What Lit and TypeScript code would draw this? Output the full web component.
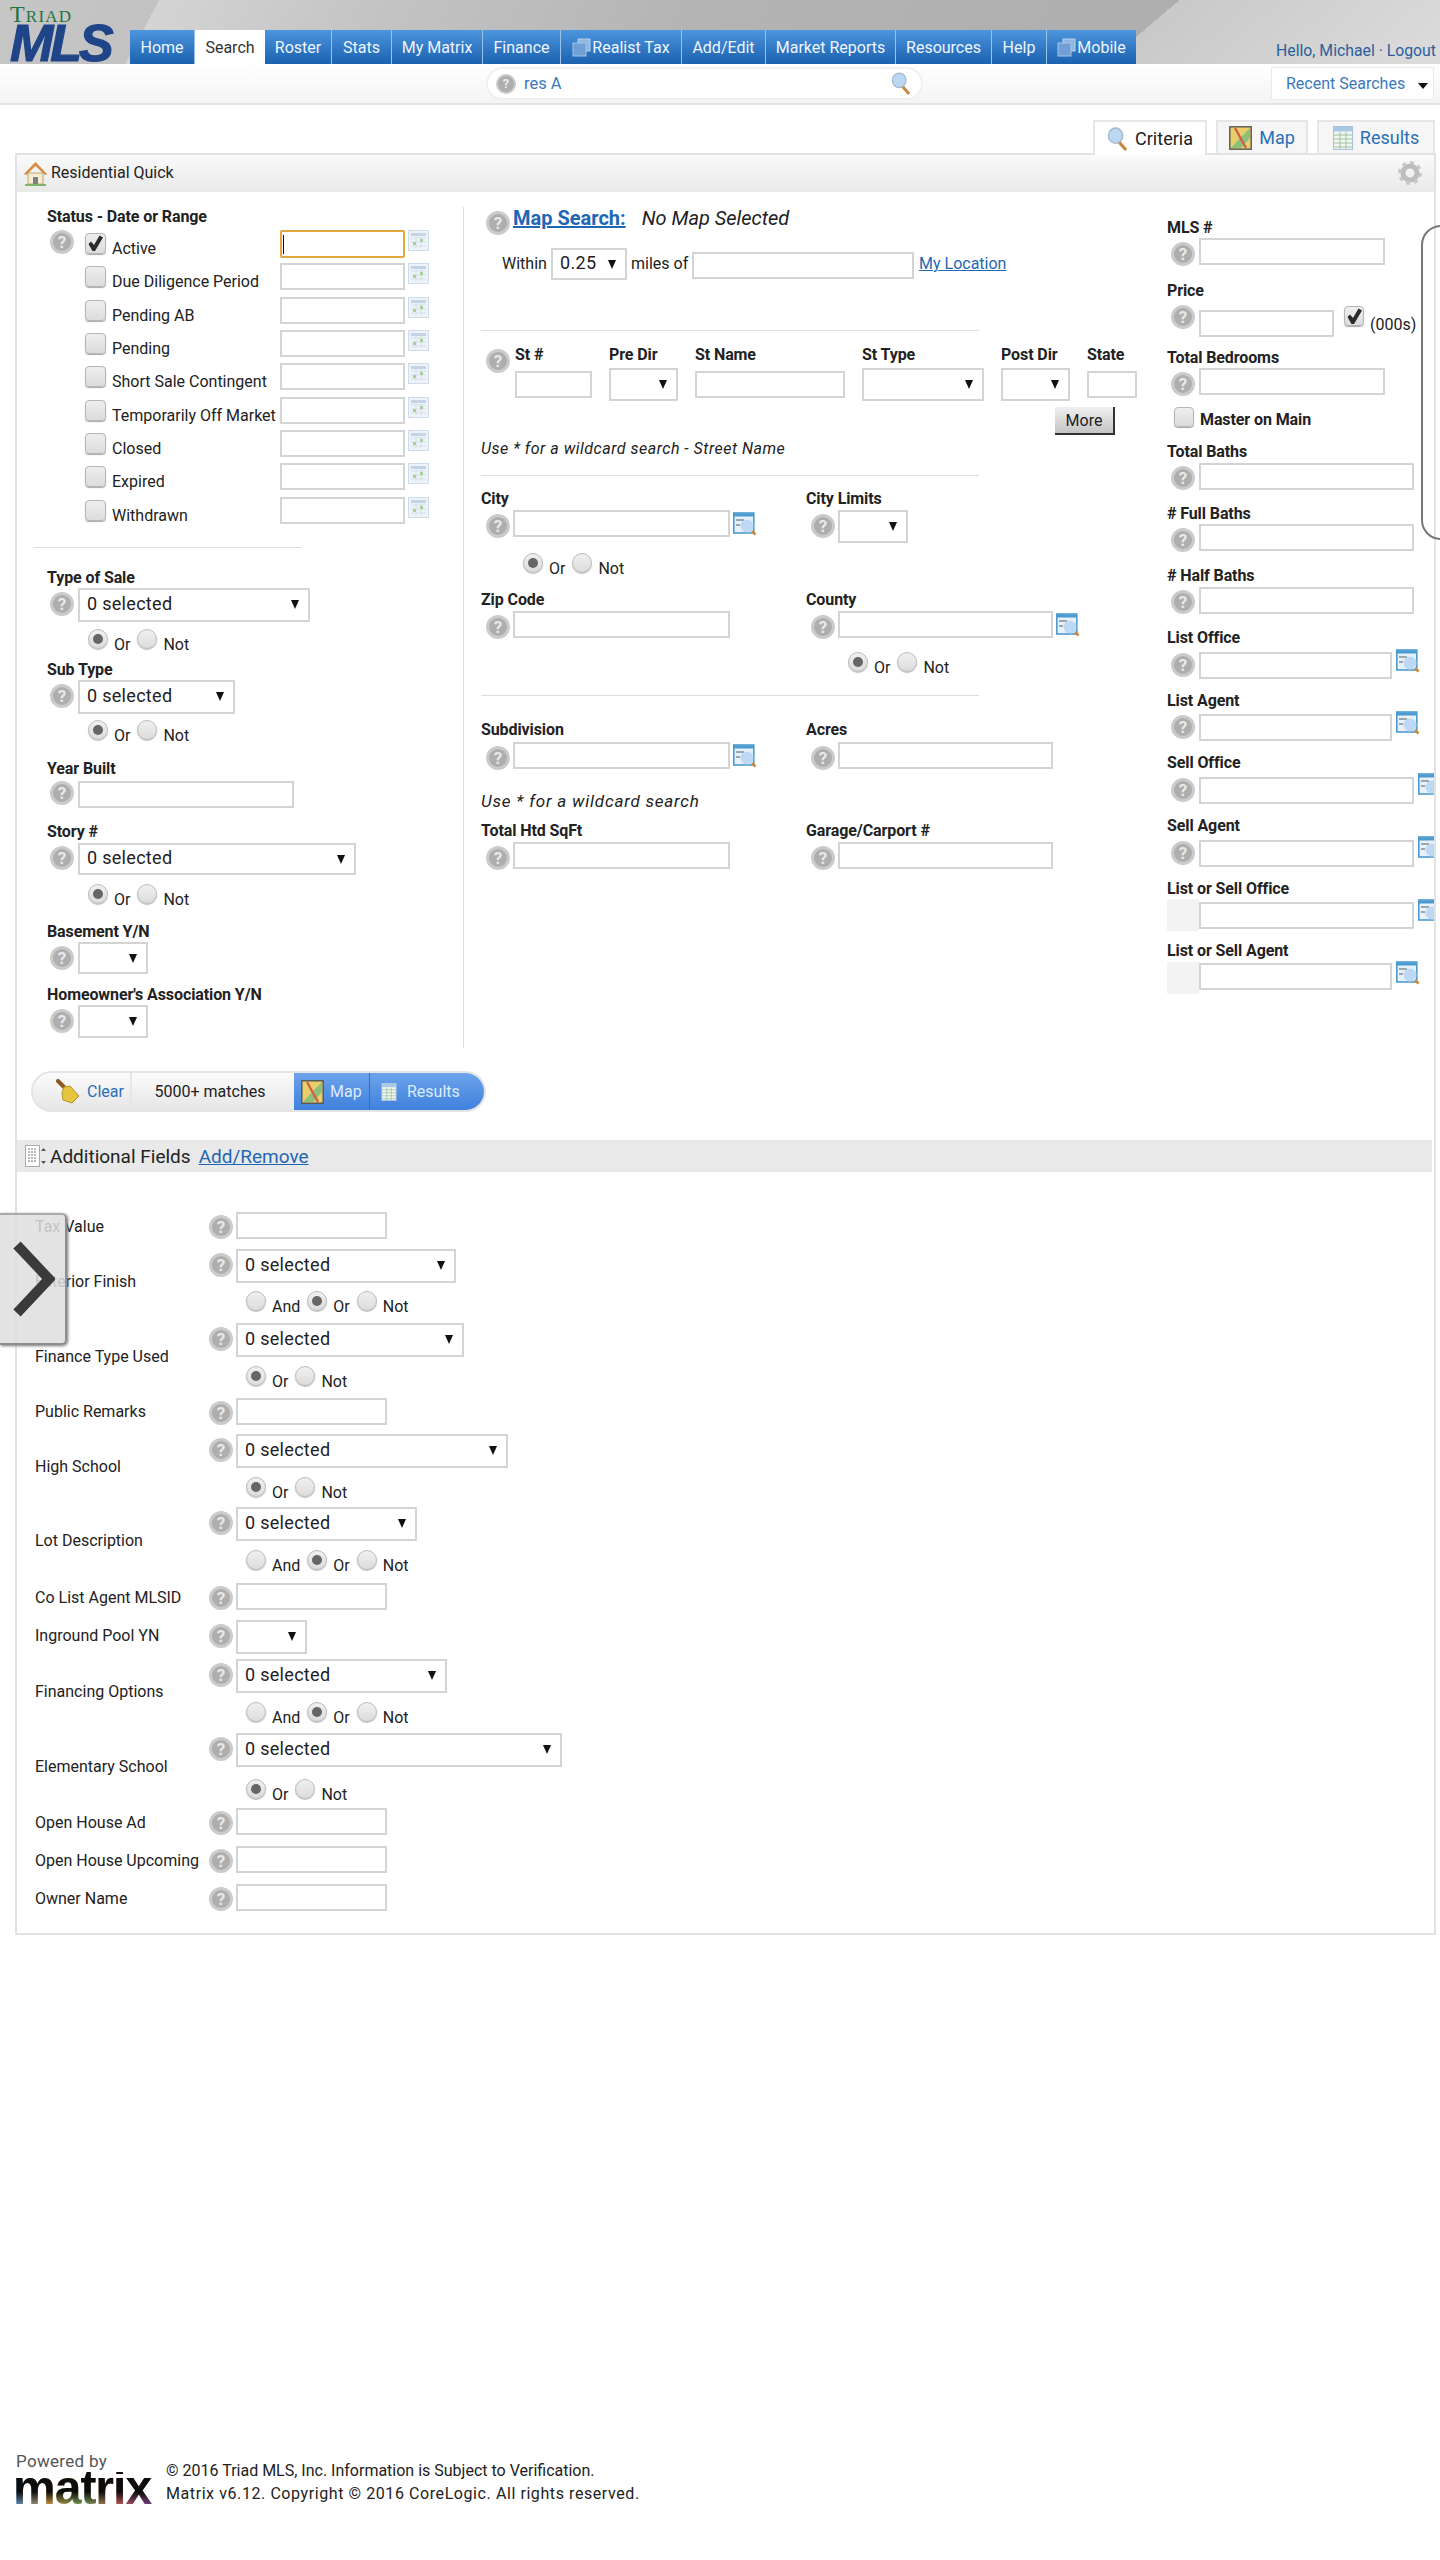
import { LitElement, html, css, svg } from "lit";
import { customElement } from "lit/decorators.js";

const help = (mt = 3) => html`<span class="help" style="margin-top:${mt}px">?</span>`;
const inp = (w: number, mt = 0) => html`<input class="in" style="width:${w}px;margin-top:${mt}px" />`;
const sel = (w: number, text = "", mt = 0, h = 33) =>
  html`<div class="sel" style="width:${w}px;height:${h}px;margin-top:${mt}px"><span>${text}</span></div>`;
const check = (on = false) =>
  html`<span class="cb">${on ? svg`<svg width="19" height="19" viewBox="0 0 19 19"><path d="M2.5 10 L5 7.5 L8 11 L13.5 1.5 L17 3.5 L9 17 L6.5 17 Z" fill="#2b2b2b"/></svg>` : ""}</span>`;
const radios = (opts: [string, boolean][], ml: number, mt: number) => html`<div class="radios" style="margin-left:${ml}px;margin-top:${mt}px">
  ${opts.map(([t, on]) => html`<span class="ropt"><span class="rd ${on ? "on" : ""}"></span><span class="rl">${t}</span></span>`)}
</div>`;
const ON: [string, boolean][] = [["Or", true], ["Not", false]];
const AON: [string, boolean][] = [["And", false], ["Or", true], ["Not", false]];

const lookup = (mt = 0) => html`<svg class="icon" style="margin-top:${mt}px" width="24" height="27" viewBox="0 0 24 27">
  <rect x="0.8" y="1" width="20" height="20" fill="#e8f1fa" stroke="#4c9bd0" stroke-width="1.6"/>
  <rect x="1" y="1.5" width="19.5" height="3" fill="#4c9bd0"/>
  <rect x="3" y="7" width="8" height="2" fill="#9aa7b0"/><rect x="3" y="12" width="4" height="2" fill="#9aa7b0"/>
  <circle cx="14" cy="14" r="6.5" fill="#bcd8f3"/><path d="M19 19l3.5 3.5" stroke="#c98a3d" stroke-width="2.6"/>
</svg>`;
const cal = () => html`<svg class="icon cal" width="21" height="21" viewBox="0 0 21 21">
  <rect x="0.5" y="0.5" width="20" height="20" fill="#eef3fa" stroke="#cfdcec"/>
  <rect x="3" y="3" width="15" height="3" fill="#c4d4e4"/>
  <path d="M3 8h15M3 12h15M3 16h15M8 6v12M13 6v12" stroke="#d5dfe8"/>
  <rect x="5" y="12" width="3" height="3" fill="#a6cf9c"/><rect x="12" y="9" width="3" height="3" fill="#a6cf9c"/>
</svg>`;
const mag = (s = 22) => html`<svg class="icon" width="${s}" height="${s + 3}" viewBox="0 0 22 25">
  <path d="M12 15l7 8" stroke="#c68a45" stroke-width="3.4" stroke-linecap="round"/>
  <ellipse cx="9" cy="9" rx="7.5" ry="8" fill="#bcd7f2" stroke="#a5b8cc" stroke-width="1.4"/>
</svg>`;
const mapIc = (w = 23, h = 24) => html`<svg class="icon" width="${w}" height="${h}" viewBox="0 0 23 24">
  <rect x="0.8" y="0.8" width="21.4" height="22.4" fill="#e8cf6a" stroke="#555" stroke-width="1.4"/>
  <path d="M2 22L10 13 L21 2V12L12 22Z" fill="#8fc07a"/>
  <path d="M6 2 L17 22" stroke="#d0604c" stroke-width="2.4"/>
</svg>`;
const tableIc = (w = 20, h = 24) => html`<svg class="icon" width="${w}" height="${h}" viewBox="0 0 20 24">
  <rect x="0.5" y="0.5" width="19" height="23" fill="#f0f6ee" stroke="#a9c1dc"/>
  <rect x="1" y="1" width="18" height="4.5" fill="#a9c8e8"/>
  <path d="M1 9h18M1 13h18M1 17h18M1 21h18M7 6v17M13 6v17" stroke="#9ec2a8"/>
</svg>`;
const winIc = () => html`<svg class="icon win" width="19" height="19" viewBox="0 0 19 19">
  <rect x="6" y="1" width="12" height="12" fill="#8fb7e0" stroke="#b9d2ec"/>
  <rect x="1" y="5" width="13" height="13" fill="#6f9fd4" stroke="#a6c4e6"/>
</svg>`;

const NAV: [string, boolean?][] = [
  ["Home"], ["Search"], ["Roster"], ["Stats"], ["My Matrix"], ["Finance"], ["Realist Tax", true],
  ["Add/Edit"], ["Market Reports"], ["Resources"], ["Help"], ["Mobile", true],
];
const NAVW = [65, 70, 67, 60, 91, 78, 121, 84, 130, 96, 55, 89];
const STATUS = ["Active", "Due Diligence Period", "Pending AB", "Pending", "Short Sale Contingent", "Temporarily Off Market", "Closed", "Expired", "Withdrawn"];

type R = { l: string; lm: number; hm: number; im: number; w: number; gray?: boolean; look?: number };
const RIGHT: R[] = [
  { l: "MLS #", lm: 11, hm: 4, im: 0, w: 186 },
  { l: "Price", lm: 15, hm: 4, im: 9, w: 135 },
  { l: "Total Bedrooms", lm: 11, hm: 4, im: 0, w: 186 },
  { l: "Total Baths", lm: 11, hm: 4, im: 1, w: 215 },
  { l: "# Full Baths", lm: 14, hm: 4, im: 0, w: 215 },
  { l: "# Half Baths", lm: 14, hm: 4, im: 1, w: 215 },
  { l: "List Office", lm: 14, hm: 5, im: 4, w: 193, look: 1 },
  { l: "List Agent", lm: 12, hm: 4, im: 3, w: 193, look: 0 },
  { l: "Sell Office", lm: 12, hm: 5, im: 4, w: 215, look: 0 },
  { l: "Sell Agent", lm: 12, hm: 5, im: 4, w: 215, look: 0 },
  { l: "List or Sell Office", lm: 12, hm: 0, im: 3, w: 215, gray: true, look: 0 },
  { l: "List or Sell Agent", lm: 10, hm: 1, im: 2, w: 193, gray: true, look: 0 },
];

type A = { l: string; h: number; kind: "in" | "sel"; w?: number; text?: string; r?: [string, boolean][]; rm?: number };
const ADD: A[] = [
  { l: "Tax Value", h: 37, kind: "in" },
  { l: "Exterior Finish", h: 74, kind: "sel", w: 220, text: "0 selected", r: AON, rm: 8 },
  { l: "Finance Type Used", h: 75, kind: "sel", w: 228, text: "0 selected", r: ON, rm: 9 },
  { l: "Public Remarks", h: 36, kind: "in" },
  { l: "High School", h: 73, kind: "sel", w: 272, text: "0 selected", r: ON, rm: 9 },
  { l: "Lot Description", h: 76, kind: "sel", w: 181, text: "0 selected", r: AON, rm: 9 },
  { l: "Co List Agent MLSID", h: 37, kind: "in" },
  { l: "Inground Pool YN", h: 39, kind: "sel", w: 71 },
  { l: "Financing Options", h: 74, kind: "sel", w: 211, text: "0 selected", r: AON, rm: 9 },
  { l: "Elementary School", h: 75, kind: "sel", w: 326, text: "0 selected", r: ON, rm: 12 },
  { l: "Open House Ad", h: 38, kind: "in" },
  { l: "Open House Upcoming", h: 38, kind: "in" },
  { l: "Owner Name", h: 37, kind: "in" },
];

@customElement("app-root")
export class AppRoot extends LitElement {
  static styles = css`
    :host { display: block; position: relative; font-family: Roboto, "Liberation Sans", sans-serif; font-size: 16px; color: #222; }
    * { box-sizing: border-box; }
    .page { display: flex; flex-direction: column; min-height: 2560px; overflow: hidden; }
    .icon { flex: none; display: block; }
    a, .link { color: #1f67b5; text-decoration: underline; }

    .top { height: 64px; display: flex; align-items: flex-end; padding-right: 4px;
      background: linear-gradient(139.5deg, transparent 766px, #c9c9c9 766px, #dcdcdc 100%),
        linear-gradient(118deg, #c6c6c6 0, #c2c2c2 140px, #d4d4d4 141px, #c4c4c4 330px, #b4b4b4 620px, #ababab 100%); }
    .logo { width: 130px; height: 64px; flex: none; padding-left: 10px; }
    .triad { font: 24px/18px "Liberation Serif", serif; font-variant: small-caps; color: #24743f; height: 18px; margin-top: 5px; letter-spacing: 1.2px; }
    .mls { font: italic 700 52px/41px "Liberation Sans", sans-serif; color: #1f4488; letter-spacing: -3px; -webkit-text-stroke: 1.2px #1f4488; }
    .nav { display: flex; height: 34px; }
    .nav div { display: flex; align-items: center; justify-content: center; gap: 1px; color: #eef5ff; border-right: 1px solid #9dc0e6;
      background: linear-gradient(#4e95e0, #1a61ae); font-size: 16px; white-space: nowrap; }
    .nav div.act { background: #fff; color: #333; border-right: 0; }
    .nav div:last-child { border-right: 0; }
    .hello { margin-left: auto; color: #2b5f9c; align-self: flex-end; padding-bottom: 4px; font-size: 15.8px; white-space: nowrap; }

    .sub { height: 41px; display: flex; padding: 3px 6px 0 486px; gap: 348px; border-bottom: 2px solid #e3e3e3;
      background: linear-gradient(#fff, #f4f4f4); }
    .omni { width: 437px; height: 33px; border: 2px solid #f0f0f0; background: #fff; border-radius: 17px; display: flex; align-items: center; padding: 0 10px 0 8px; color: #3a78bd; font-size: 16.5px; }
    .omni .help { width: 20px; height: 20px; font-size: 13px; line-height: 15px; border-width: 2px; margin: 0 8px 0 0; }
    .omni .q { flex: 1; }
    .recent { width: 163px; height: 33px; background: #fff; border: 1px solid #eaeaea; display: flex; align-items: center; color: #3a78bd; padding-left: 14px; position: relative; white-space: nowrap; }
    .recent i { margin-left: 13px; margin-top: 4px; border-top: 6px solid #111; border-left: 5px solid transparent; border-right: 5px solid transparent; }

    .tabs { display: flex; justify-content: flex-end; gap: 9px; padding: 15px 5px 0 0; height: 48px; }
    .tab { height: 33px; display: flex; align-items: center; font-size: 18px; color: #2a6fb8; gap: 7px; background: #f6f6f6;
      border: 2px solid #e6e6e6; border-bottom: 0; justify-content: center; }
    .tab.act { background: #fff; color: #222; height: 35px; margin-bottom: -2px; position: relative; z-index: 1; }

    .panel { margin-left: 15px; width: 1421px; border: 2px solid #e2e2e2; padding-bottom: 12px; position: relative; }
    .ph { height: 37px; display: flex; align-items: center; padding: 0 12px 2px 6px; gap: 3px; background: linear-gradient(#fafafa, #e9e9e9); }
    .ph .sp { flex: 1; }
    .body { display: flex; padding-top: 15px; align-items: stretch; }
    .col1 { width: 447px; flex: none; border-right: 1px solid #ddd; height: 841px; }
    .col2 { width: 703px; flex: none; padding-left: 17px; }
    .col3 { flex: 1; min-width: 0; overflow: hidden; }

    .lbl { font-weight: 700; font-size: 16px; line-height: 20px; height: 20px; white-space: nowrap; letter-spacing: -0.1px; }
    .in { display: block; flex: none; height: 27px; border: 2px solid #d4d4d4; background: #fff; padding: 0; margin: 0; outline: 0; }
    .sel { flex: none; border: 2px solid #d4d4d4; background: #fff; position: relative; padding: 0 0 3px 7px; display: flex; align-items: center; font-size: 18px; color: #222; letter-spacing: .3px; white-space: nowrap; }
    .sel::after { content: ""; position: absolute; right: 9px; top: 10px; border-top: 9px solid #111; border-left: 4px solid transparent; border-right: 4px solid transparent; }
    .help { flex: none; display: block; width: 24px; height: 24px; border-radius: 50%; background: #aeaeae; border: 3px solid #cbcbcb; color: #e9e9e9; font-weight: 700; font-size: 17px; line-height: 18px; text-align: center; }
    .cb { flex: none; display: block; width: 21px; height: 21px; border: 1px solid #b5b5b5; border-radius: 4px; background: linear-gradient(#eee, #dcdcdc); box-shadow: 0 1px 1px #aaa; margin-top: 3px; }
    .cb svg { display: block; }
    .radios { display: flex; gap: 7px; height: 30px; }
    .ropt { display: flex; gap: 6px; }
    .rd { flex: none; width: 20px; height: 20px; border-radius: 50%; border: 1px solid #bbb; background: linear-gradient(#f0f0f0, #dcdcdc); box-shadow: 0 1px 1px #bbb; position: relative; }
    .rd.on::after { content: ""; position: absolute; left: 4px; top: 4px; width: 10px; height: 10px; border-radius: 50%; background: #666; }
    .rl { line-height: 20px; margin-top: 6px; }

    .srow { height: 33.33px; display: flex; align-items: flex-start; padding-left: 33px; }
    .srow .hs { width: 35px; flex: none; }
    .srow .t { width: 174px; padding-left: 6px; padding-top: 9px; line-height: 20px; white-space: nowrap; flex: none; }
    .srow .cal { margin: 0 0 0 3px; }
    .fwrap { position: relative; flex: none; display: block; }
    .fwrap::after { content: ""; position: absolute; left: 3px; top: 5px; width: 1px; height: 19px; background: #111; }
    .in.focus { border-color: #e3a93c; border-radius: 2px; height: 28px; }
    .hr1 { margin: 17px 0 0 17px; width: 267px; height: 1px; background: #ddd; }
    .lf { padding-left: 30px; }
    .ctl { display: flex; align-items: flex-start; gap: 4px; padding-left: 3px; }

    .hr2 { width: 498px; height: 1px; background: #ddd; }
    .h5 { margin-left: 5px; }
    .mapr { display: flex; align-items: flex-start; }
    .mapt { font-size: 20px; line-height: 22px; font-weight: 700; }
    .maps { font-size: 20px; line-height: 22px; font-style: italic; margin-left: 16px; }
    .within { display: flex; align-items: flex-start; margin: 13px 0 0 21px; line-height: 32px; }
    .within .w1 { width: 49px; }
    .within .w2 { width: 65px; padding-left: 4px; white-space: nowrap; }
    .street { display: flex; gap: 17px; margin-top: 14px; margin-left: 5px; }
    .street > .help { margin: 4px -12px 0 0; }
    .scol .lbl { height: 23px; line-height: 20px; }
    .morew { display: flex; padding-left: 574px; margin-top: 6px; }
    .more { width: 60px; height: 28px; display: flex; align-items: center; justify-content: center; background: linear-gradient(#f0f0f0, #c4c4c4); border-right: 2px solid #333; border-bottom: 2px solid #333; }
    .note { font-style: italic; line-height: 20px; height: 20px; font-size: 16px; letter-spacing: .5px; white-space: nowrap; }
    .note.wide { font-size: 17px; letter-spacing: .8px; }
    .two { display: grid; grid-template-columns: 325px 1fr; }
    .cc { display: flex; align-items: flex-start; gap: 3px; margin-top: 1px; padding-left: 5px; }

    .col3 .rf { display: flex; align-items: flex-start; gap: 4px; padding-left: 4px; }
    .col3 .rf.g { padding-left: 0; }
    .gray { width: 32px; height: 32px; background: #f3f3f3; flex: none; margin-right: -4px; }
    .miss { display: flex; gap: 6px; padding-left: 7px; margin-top: 8px; height: 27px; }
    .miss .cb { margin: 3px 0 0; width: 20px; height: 20px; }
    .miss .lbl { margin-top: 6px; }
    .k000 { display: flex; gap: 6px; margin-left: 6px; margin-top: 8px; }
    .k000 .cb { margin-top: -3px; width: 20px; height: 20px; }
    .k000 span.t { margin-top: 6px; line-height: 20px; white-space: nowrap; }

    .bar { margin: 23px 0 0 14px; width: 455px; height: 41px; border: 2px solid #e4e4e4; border-radius: 21px; display: flex; overflow: hidden; background: linear-gradient(#fbfbfb, #e6e6e6); }
    .bar > div { display: flex; align-items: center; height: 100%; }
    .clear { width: 99px; padding-left: 23px; gap: 6px; border-right: 2px solid #e6e6e6; color: #2a6fb8; }
    .cnt { width: 162px; justify-content: center; padding-right: 6px; }
    .bmap { width: 76px; background: linear-gradient(#6da3ea, #3f81dd); color: #dcebff; padding-left: 7px; gap: 6px; border-right: 1px solid #2c6fd0; }
    .bres { flex: 1; background: linear-gradient(#6da3ea, #3f81dd); color: #dcebff; padding-left: 10px; gap: 9px; }

    .addh { margin-top: 28px; height: 32px; background: #e9e9e9; display: flex; align-items: center; padding-left: 8px; font-size: 19px; width: 1415px; }
    .addh .link { margin-left: 8px; }
    .rows { margin-top: 40px; padding-left: 18px; }
    .arow { display: grid; grid-template-columns: 174px 27px 1fr; }
    .arow .al { align-self: center; white-space: nowrap; margin-top: -8px; line-height: 20px; }
    .arow .ah { display: block; }

    .tilt { position: absolute; left: 0; top: 1213px; width: 67px; height: 132px; background: rgba(222, 222, 222, .86); border-right: 2px solid #8e8e8e; border-bottom: 2px solid #8e8e8e; border-top: 2px solid #aaa; border-radius: 0 5px 5px 0; box-shadow: 1px 1px 3px #777; display: flex; align-items: center; justify-content: center; }
    .curve { position: absolute; left: 1421px; top: 225px; width: 40px; height: 315px; border: 2px solid #777; border-radius: 26px; background: transparent; }

    .foot { margin-top: auto; display: flex; padding: 0 0 55px 16px; }
    .flogo { width: 150px; flex: none; margin-top: -3px; }
    .pb { color: #555; font-size: 17px; line-height: 15px; height: 18px; letter-spacing: .3px; white-space: nowrap; }
    .mx { font: 700 48px/32px "Liberation Sans", sans-serif; letter-spacing: -1px; height: 32px; width: 140px; margin-left: -3px;
      background: linear-gradient(to bottom, #0d0d0d 0 62%, rgba(13, 13, 13, .25) 100%), linear-gradient(to right, #58a6f5, #f5b648, #7fc265, #ea6a6a, #7b4aa6); -webkit-background-clip: text; background-clip: text; color: transparent; }
    .ft { line-height: 23px; padding-top: 2px; }
    .ft .l2 { letter-spacing: .58px; white-space: nowrap; }
  `;

  private rightField(r: R) {
    return html`<div class="lbl" style="margin-top:${r.lm}px">${r.l}</div>
      <div class="rf ${r.gray ? "g" : ""}">
        ${r.gray ? html`<span class="gray" style="margin-top:${r.hm}px"></span>` : help(r.hm)}
        ${inp(r.w, r.im)}
        ${r.look !== undefined ? lookup(r.look) : ""}
        ${r.l === "Price" ? html`<span class="k000">${check(true)}<span class="t">(000s)</span></span>` : ""}
      </div>
      ${r.l === "Total Bedrooms" ? html`<div class="miss">${check()}<span class="lbl">Master on Main</span></div>` : ""}`;
  }

  render() {
    return html`<div class="page">
      <div class="top">
        <div class="logo"><div class="triad">Triad</div><div class="mls">MLS</div></div>
        <div class="nav">
          ${NAV.map(([t, ic], i) => html`<div class="${t === "Search" ? "act" : ""}" style="width:${NAVW[i]}px">${ic ? winIc() : ""}${t}</div>`)}
        </div>
        <div class="hello">Hello, Michael · Logout</div>
      </div>
      <div class="sub">
        <div class="omni"><span class="help">?</span><span class="q">res A</span>${mag(20)}</div>
        <div class="recent">Recent Searches<i></i></div>
      </div>
      <div class="tabs">
        <div class="tab act" style="width:114px">${mag(21)}Criteria</div>
        <div class="tab" style="width:92px">${mapIc()}Map</div>
        <div class="tab" style="width:118px">${tableIc()}Results</div>
      </div>
      <div class="panel">
        <div class="ph">
          <svg class="icon" width="25" height="26" viewBox="0 0 25 26"><path d="M5 13h15v11H5z" fill="#f4eccd" stroke="#bba97a"/><path d="M10 17h5v7h-5z" fill="#7a7f88"/><path d="M1 14 12.5 2 24 14l-2 1L12.5 6 3 15z" fill="#d98a3a"/><path d="M2 24h21v2H2z" fill="#7eb56a"/></svg>
          Residential Quick<span class="sp"></span>
          <svg class="icon" width="24" height="24" viewBox="0 0 24 24"><circle cx="12" cy="12" r="7" fill="none" stroke="#bdbdbd" stroke-width="5"/><circle cx="12" cy="12" r="10.5" fill="none" stroke="#c8c8c8" stroke-width="3" stroke-dasharray="4 4.2"/></svg>
        </div>
        <div class="body">
          <div class="col1">
            <div class="lf lbl" style="height:23px">Status - Date or Range</div>
            ${STATUS.map((s, i) => html`<div class="srow">
              <span class="hs">${i === 0 ? help(0) : ""}</span>
              ${check(i === 0)}<span class="t">${s}</span>
              ${i === 0
                ? html`<span class="fwrap"><input class="in focus" style="width:125px" /></span>`
                : html`<input class="in" style="width:125px" />`}${cal()}
            </div>`)}
            <div class="hr1"></div>
            <div class="lf">
              <div class="lbl" style="margin-top:20px">Type of Sale</div>
              <div class="ctl">${help(4)}${sel(232, "0 selected", 0, 34)}</div>
              ${radios(ON, 41, 7)}<div style="height:1px"></div>
              <div class="lbl">Sub Type</div>
              <div class="ctl">${help(4)}${sel(157, "0 selected", 0, 34)}</div>
              ${radios(ON, 41, 6)}<div style="height:9px"></div>
              <div class="lbl">Year Built</div>
              <div class="ctl">${help(2)}${inp(216, 2)}</div>
              <div class="lbl" style="margin-top:14px">Story #</div>
              <div class="ctl">${help(4)}${sel(278, "0 selected", 1, 32)}</div>
              ${radios(ON, 41, 9)}<div style="height:8px"></div>
              <div class="lbl">Basement Y/N</div>
              <div class="ctl">${help(4)}${sel(70, "", 0, 32)}</div>
              <div class="lbl" style="margin-top:11px">Homeowner's Association Y/N</div>
              <div class="ctl">${help(4)}${sel(70, "", 0, 33)}</div>
            </div>
          </div>
          <div class="col2">
            <div class="mapr">
              <span class="h5">${help(4)}</span>
              <span class="mapt link" style="margin-left:3px">Map Search:</span><span class="maps">No Map Selected</span>
            </div>
            <div class="within">
              <span class="w1">Within</span>
              <div class="sel" style="width:76px;height:32px">0.25</div>
              <span class="w2">miles of</span>
              ${inp(222, 4)}
              <span class="link" style="margin-left:5px">My Location</span>
            </div>
            <div class="hr2" style="margin-top:50px"></div>
            <div class="street">
              ${help(4)}
              <div class="scol" style="width:77px"><div class="lbl">St #</div>${inp(77, 3)}</div>
              <div class="scol"><div class="lbl">Pre Dir</div>${sel(69)}</div>
              <div class="scol"><div class="lbl">St Name</div>${inp(150, 3)}</div>
              <div class="scol"><div class="lbl">St Type</div>${sel(122)}</div>
              <div class="scol"><div class="lbl">Post Dir</div>${sel(69)}</div>
              <div class="scol"><div class="lbl">State</div>${inp(50, 3)}</div>
            </div>
            <div class="morew"><div class="more">More</div></div>
            <div class="note" style="margin-top:4px">Use * for a wildcard search - Street Name</div>
            <div class="hr2" style="margin-top:16px"></div>
            <div class="two" style="margin-top:13px">
              <div>
                <div class="lbl">City</div>
                <div class="cc">${help(4)}${inp(217)}${lookup(2)}</div>
                ${radios(ON, 42, 14)}<div style="height:7px"></div>
              </div>
              <div>
                <div class="lbl">City Limits</div>
                <div class="cc">${help(4)}${sel(70)}</div>
              </div>
              <div>
                <div class="lbl">Zip Code</div>
                <div class="cc">${help(4)}${inp(217)}</div>
              </div>
              <div>
                <div class="lbl">County</div>
                <div class="cc">${help(4)}${inp(215)}${lookup(2)}</div>
                ${radios(ON, 42, 12)}
              </div>
            </div>
            <div class="hr2" style="margin-top:13px"></div>
            <div class="two" style="margin-top:24px">
              <div>
                <div class="lbl">Subdivision</div>
                <div class="cc" style="margin-top:2px">${help(4)}${inp(217)}${lookup(2)}</div>
              </div>
              <div>
                <div class="lbl">Acres</div>
                <div class="cc" style="margin-top:2px">${help(4)}${inp(215)}</div>
              </div>
            </div>
            <div class="note wide" style="margin-top:20px">Use * for a wildcard search</div>
            <div class="two" style="margin-top:10px">
              <div>
                <div class="lbl">Total Htd SqFt</div>
                <div class="cc">${help(4)}${inp(217)}</div>
              </div>
              <div>
                <div class="lbl">Garage/Carport #</div>
                <div class="cc">${help(4)}${inp(215)}</div>
              </div>
            </div>
          </div>
          <div class="col3">${RIGHT.map((r) => this.rightField(r))}</div>
        </div>
        <div class="bar">
          <div class="clear">
            <svg class="icon" width="25" height="25" viewBox="0 0 25 25"><path d="M2 2l8 8" stroke="#8a5a24" stroke-width="4" stroke-linecap="round"/><path d="M8 8l6-1 9 10-7 7-9-3-1-7z" fill="#e6c43c" stroke="#b8962a"/></svg>
            Clear
          </div>
          <div class="cnt">5000+ matches</div>
          <div class="bmap">${mapIc()}Map</div>
          <div class="bres">${tableIc(18, 18)}Results</div>
        </div>
        <div class="addh">
          <svg class="icon" width="22" height="22" viewBox="0 0 22 22" style="margin-right:3px"><rect x="0.5" y="0.5" width="14" height="21" fill="#fff" stroke="#aaa"/><path d="M3 4h9M3 7h9M3 10h9M3 13h9M3 16h9" stroke="#777" stroke-dasharray="2 1"/><path d="M16 6l2.5-3L21 6zM16 16l2.5 3 2.5-3z" fill="#555"/></svg>
          Additional Fields<span class="link">Add/Remove</span>
        </div>
        <div class="rows">
          ${ADD.map((a) => html`<div class="arow" style="height:${a.h}px">
            <span class="al">${a.l}</span>
            <span class="ah">${help(a.kind === "sel" ? 4 : 3)}</span>
            <div>
              ${a.kind === "in" ? inp(151) : sel(a.w!, a.text ?? "", 0, 34)}
              ${a.r ? radios(a.r, 10, a.rm!) : ""}
            </div>
          </div>`)}
        </div>
      </div>
      <div class="foot">
        <div class="flogo"><div class="pb">Powered by</div><div class="mx">matrix</div></div>
        <div class="ft">© 2016 Triad MLS, Inc. Information is Subject to Verification.<br /><span class="l2">Matrix v6.12. Copyright © 2016 CoreLogic. All rights reserved.</span></div>
      </div>
      <div class="tilt"><svg width="44" height="80" viewBox="0 0 44 80"><path d="M6 6 38 40 6 74" fill="none" stroke="#3a3a3a" stroke-width="10"/></svg></div>
      <div class="curve"></div>
    </div>`;
  }
}
